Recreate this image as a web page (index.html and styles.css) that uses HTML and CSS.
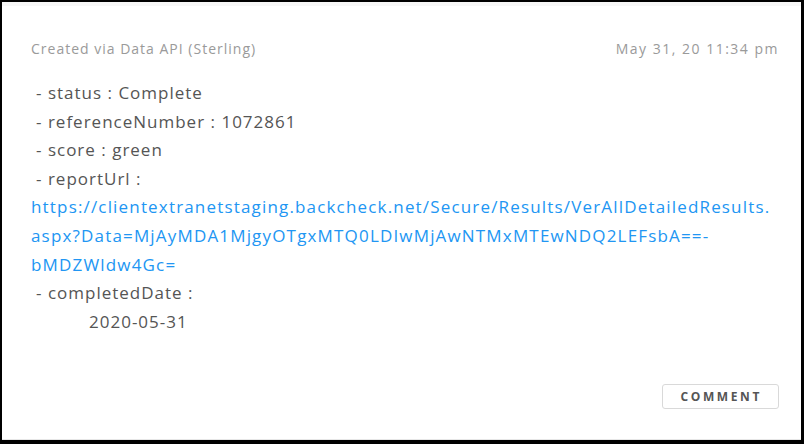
FILE: index.html
```html
<!DOCTYPE html>
<html lang="en">
<head>
    <meta charset="UTF-8">
    <meta name="viewport" content="width=device-width, initial-scale=1.0">
    <title>Activity note</title>
    <link rel="stylesheet" href="styles.css">
</head>
<body>

<div class="card">
    <!-- Header -->
    <div class="note-header">
        <span class="source">Created via Data API (Sterling)</span>
        <span class="date">May 31, 20 11:34 pm</span>
    </div>

    <!-- Note body -->
    <div class="note-body">
        <div class="field">- status : Complete</div>
        <div class="field">- referenceNumber : 1072861</div>
        <div class="field">- score : green</div>
        <div class="field">- reportUrl :</div>
        <a class="link" href="#">https://clientextranetstaging.backcheck.net/Secure/Results/VerAllDetailedResults.<br>aspx?Data=MjAyMDA1MjgyOTgxMTQ0LDIwMjAwNTMxMTEwNDQ2LEFsbA==-<br>bMDZWldw4Gc=</a>
        <div class="field">- completedDate :</div>
        <div class="value">2020-05-31</div>
    </div>

    <div class="actions">
        <button class="comment-btn">Comment</button>
    </div>
</div>

</body>
</html>
```

FILE: styles.css
```css
html, body {
    margin: 0;
    height: 100%;
}

body {
    background-color: #000;
    font-family: "Open Sans", Arial, sans-serif;
    padding: 2px 3px 4px 2px;
    box-sizing: border-box;
}

.card {
    background-color: #fff;
    height: 100%;
    border-top: 4px solid #f7f7f7;
    border-bottom: 1px solid #e6e6e6;
    box-sizing: border-box;
    padding: 31px 22px 0 29px;
    display: flex;
    flex-direction: column;
}

.note-header {
    display: flex;
    justify-content: space-between;
    font-size: 14px;
    letter-spacing: 1px;
    color: #9a9a9a;
    line-height: 24px;
}

.note-header .date {
    letter-spacing: 1.5px;
}

.note-body {
    margin-top: 18px;
    font-size: 17px;
    letter-spacing: 1px;
    line-height: 28.6px;
    color: #555;
}

.field {
    padding-left: 5px;
}

.value {
    padding-left: 58px;
}

.link {
    display: block;
    color: #2196f3;
    letter-spacing: 1.17px;
    text-decoration: none;
}

.actions {
    display: flex;
    justify-content: flex-end;
    margin-top: 48px;
}

.comment-btn {
    background-color: #fff;
    border: 1px solid #d9d9d9;
    border-radius: 3px;
    padding: 0 16px 0 18px;
    height: 25px;
    font-family: "Open Sans", Arial, sans-serif;
    font-size: 12px;
    font-weight: bold;
    letter-spacing: 2.6px;
    text-transform: uppercase;
    color: #555;
    cursor: pointer;
}
```
